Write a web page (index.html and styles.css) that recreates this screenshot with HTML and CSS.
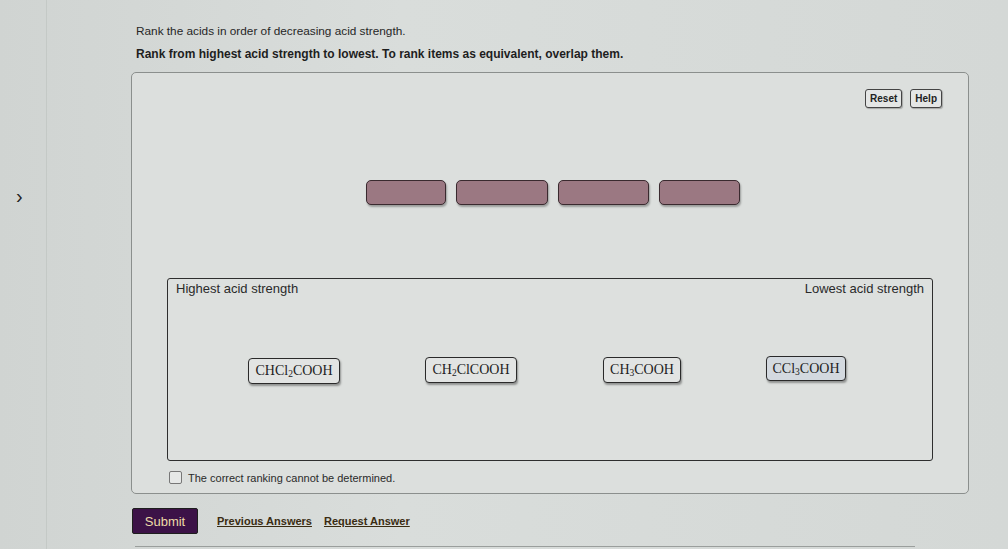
FILE: index.html
```html
<!DOCTYPE html>
<html>
<head>
<meta charset="utf-8">
<link rel="stylesheet" href="styles.css">
</head>
<body>
<div class="page">
  <div class="gutter"><span class="chev">&#8250;</span></div>
  <div class="main">
    <p class="q">Rank the acids in order of decreasing acid strength.</p>
    <p class="instr">Rank from highest acid strength to lowest. To rank items as equivalent, overlap them.</p>
    <div class="panel">
      <div class="tools">
        <button class="tbtn">Reset</button>
        <button class="tbtn">Help</button>
      </div>
      <div class="slots">
        <div class="slot s1"></div>
        <div class="slot s2"></div>
        <div class="slot s3"></div>
        <div class="slot s4"></div>
      </div>
      <div class="rank">
        <div class="labels">
          <span>Highest acid strength</span>
          <span>Lowest acid strength</span>
        </div>
        <div class="chips">
          <div class="chip c1">CHCl<sub>2</sub>COOH</div>
          <div class="chip c2">CH<sub>2</sub>ClCOOH</div>
          <div class="chip c3">CH<sub>3</sub>COOH</div>
          <div class="chip c4">CCl<sub>3</sub>COOH</div>
        </div>
      </div>
      <label class="check"><span class="box"></span>The correct ranking cannot be determined.</label>
    </div>
    <div class="actions">
      <button class="submit">Submit</button>
      <a class="link">Previous Answers</a>
      <a class="link">Request Answer</a>
    </div>
    <div class="rule"></div>
  </div>
</div>
</body>
</html>
```
FILE: styles.css
```css
html, body {
  margin: 0;
  padding: 0;
}
body {
  width: 1008px;
  height: 549px;
  overflow: hidden;
  background: linear-gradient(90deg, #d0d4d2 0%, #d9dddb 40%, #d4d8d6 100%);
  font-family: "Liberation Sans", Arial, sans-serif;
  color: #1e1e1e;
}
.page {
  display: flex;
  height: 549px;
}
.gutter {
  width: 46px;
  border-right: 1px solid #c4c9c6;
  flex: none;
}
.chev {
  display: block;
  margin: 186px 0 0 16px;
  font-size: 20px;
  line-height: 20px;
  color: #222;
}
.main {
  margin-left: 84px;
  width: 838px;
  display: flex;
  flex-direction: column;
}
.q {
  margin: 24px 0 0 5px;
  font-size: 11.8px;
  line-height: 14px;
  color: #262626;
}
.instr {
  margin: 9px 0 0 5px;
  font-size: 12px;
  font-weight: bold;
  line-height: 14px;
  color: #1e1e1e;
}
.panel {
  margin-top: 11px;
  height: 422px;
  border: 1px solid #8b8f8d;
  border-radius: 5px;
  background: #dcdfdd;
  box-sizing: border-box;
  display: flex;
  flex-direction: column;
}
.tools {
  display: flex;
  justify-content: flex-end;
  gap: 8px;
  margin: 16px 26px 0 0;
}
.tbtn {
  height: 19px;
  padding: 0 4px;
  border: 1px solid #444;
  border-radius: 3px;
  background: #e4e6e5;
  font-family: "Liberation Sans", Arial, sans-serif;
  font-size: 10px;
  font-weight: bold;
  color: #222;
  box-shadow: 1px 1px 1px rgba(0,0,0,0.25);
}
.slots {
  display: flex;
  gap: 10px;
  margin: 72px 0 0 234px;
}
.slot {
  height: 25px;
  box-sizing: border-box;
  background: #9b7882;
  border: 1.5px solid #3a2a2f;
  border-radius: 5px;
  box-shadow: 1px 2px 2px rgba(0,0,0,0.3);
}
.s1 { width: 80px; }
.s2 { width: 92px; }
.s3 { width: 91px; }
.s4 { width: 81px; }
.rank {
  margin: 73px 0 0 35px;
  width: 766px;
  height: 183px;
  box-sizing: border-box;
  border: 1.5px solid #2e2e2e;
  border-radius: 3px;
  background: #dde0de;
  display: flex;
  flex-direction: column;
}
.labels {
  display: flex;
  justify-content: space-between;
  padding: 2px 8px 0 8px;
  font-size: 13px;
  line-height: 15px;
  color: #2a2a2a;
}
.chips {
  display: flex;
  margin-top: 62px;
}
.chip {
  height: 26px;
  box-sizing: border-box;
  border: 1.5px solid #2a2a2a;
  border-radius: 4px;
  background: #e2e4e3;
  font-family: "Liberation Serif", "Times New Roman", serif;
  font-size: 14px;
  line-height: 23px;
  text-align: center;
  color: #222;
  white-space: nowrap;
  box-shadow: 1px 2px 2px rgba(0,0,0,0.35);
}
.chip sub {
  font-size: 9.5px;
  vertical-align: -2px;
  line-height: 0;
}
.c1 { width: 92px; margin-left: 80px; }
.c2 { width: 92px; margin-left: 85px; margin-top: -1px; }
.c3 { width: 78px; margin-left: 86px; margin-top: -1px; }
.c4 { width: 80px; margin-left: 85px; margin-top: -2px; height: 25px; background: #d3d9df; }
.check {
  display: flex;
  align-items: center;
  margin: 10px 0 0 37px;
  font-size: 11px;
  color: #2a2a2a;
}
.box {
  width: 11px;
  height: 11px;
  border: 1px solid #777;
  border-radius: 2px;
  background: #e6e8e7;
  margin-right: 6px;
}
.actions {
  display: flex;
  align-items: center;
  margin-top: 14px;
  margin-left: 1px;
}
.submit {
  width: 66px;
  height: 26px;
  background: #3c1247;
  border: 1.5px solid #1e1e1e;
  border-radius: 2px;
  color: #ecdca8;
  font-family: "Liberation Sans", Arial, sans-serif;
  font-size: 13px;
  padding: 0;
}
.link {
  font-size: 11px;
  font-weight: bold;
  text-decoration: underline;
  color: #3a2c12;
  margin-left: 19px;
}
.link + .link {
  margin-left: 12px;
}
.rule {
  margin-top: 12px;
  width: 780px;
  margin-left: 4px;
  height: 1px;
  background: #9a9e9c;
}
```
